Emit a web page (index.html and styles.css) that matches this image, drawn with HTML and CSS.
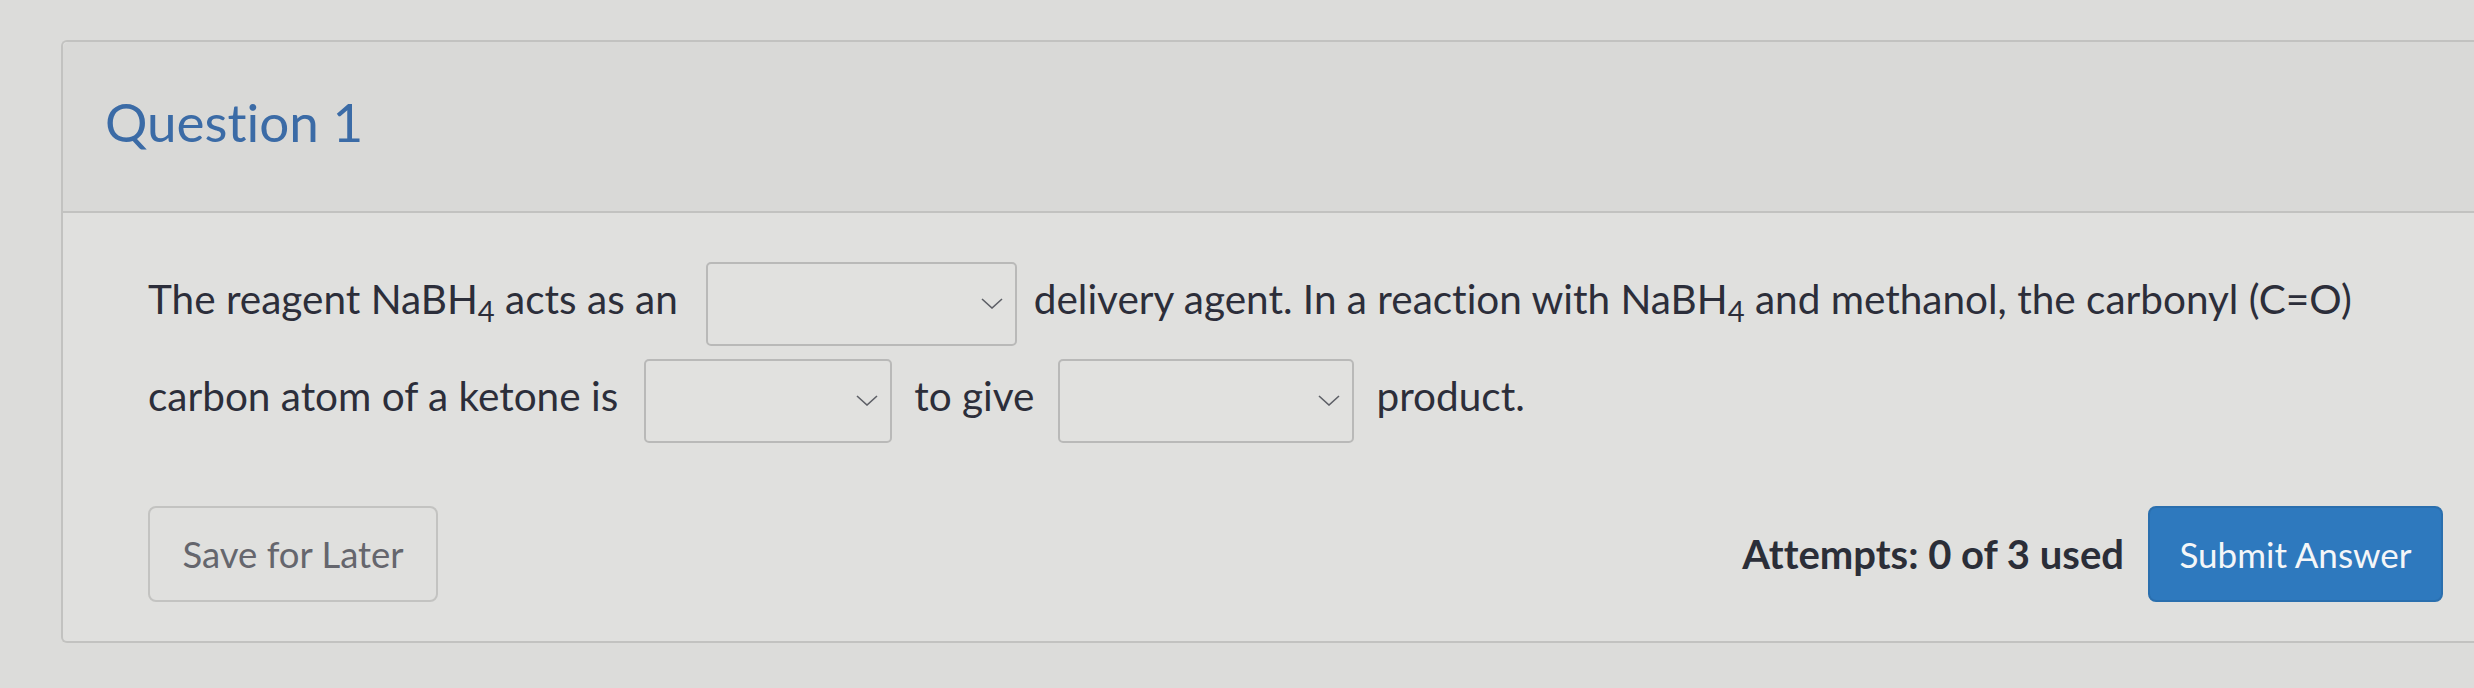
FILE: index.html
```html
<!DOCTYPE html>
<html lang="en">
<head>
<meta charset="utf-8">
<title>Question 1</title>
<link rel="stylesheet" href="styles.css">
</head>
<body>
<div class="page">
  <section class="card">
    <header class="card-header">
      <h2 class="title">Question 1</h2>
    </header>
    <div class="card-body">
      <p class="question"><span class="seg">The reagent NaBH</span><sub class="sub">4</sub><span class="seg"> acts as an</span><span class="select select-1"><svg class="chev" width="22" height="11" viewBox="0 0 22 11"><polyline points="1,1 11,10 21,1" fill="none" stroke="#5d5f66" stroke-width="1.6"/></svg></span><span class="seg">delivery agent. In a reaction with NaBH</span><sub class="sub">4</sub><span class="seg"> and methanol, the carbonyl (C=O)</span> <span class="seg">carbon atom of a ketone is</span><span class="select select-2"><svg class="chev" width="22" height="11" viewBox="0 0 22 11"><polyline points="1,1 11,10 21,1" fill="none" stroke="#5d5f66" stroke-width="1.6"/></svg></span><span class="seg">to give</span><span class="select select-3"><svg class="chev" width="22" height="11" viewBox="0 0 22 11"><polyline points="1,1 11,10 21,1" fill="none" stroke="#5d5f66" stroke-width="1.6"/></svg></span><span class="seg">product.</span></p>
      <div class="actions">
        <button class="btn btn-save">Save for Later</button>
        <div class="right">
          <span class="attempts">Attempts: 0 of 3 used</span>
          <button class="btn btn-submit">Submit Answer</button>
        </div>
      </div>
    </div>
  </section>
</div>
</body>
</html>
```
FILE: styles.css
```css
html, body {
  margin: 0;
  padding: 0;
}
body {
  background: #dcdcda;
  font-family: Lato, "Open Sans", "Liberation Sans", sans-serif;
  font-variant-ligatures: none;
  font-feature-settings: "liga" 0, "dlig" 0;
  overflow: hidden;
  width: 2474px;
  height: 688px;
}
.page {
  padding-top: 40px;
  padding-left: 61px;
}
.card {
  width: 2460px;
  border: 2px solid #c2c2c0;
  border-right: none;
  border-radius: 6px 0 0 6px;
  background: #e0e0de;
}
.card-header {
  background: #d9d9d7;
  border-bottom: 2px solid #c2c2c0;
  padding: 48px 0 57px 42px;
  border-radius: 6px 0 0 0;
}
.title {
  margin: 0;
  font-size: 53px;
  line-height: 64px;
  font-weight: 400;
  color: #3b6ba6;
}
.card-body {
  padding: 37px 0 39px 85px;
}
.question {
  margin: 0;
  width: 2298px;
  font-size: 40.5px;
  line-height: 97px;
  color: #2c2e3a;
}
.sub {
  font-size: 0.72em;
  vertical-align: -8px;
  line-height: 1;
}
.select {
  display: inline-flex;
  align-items: center;
  justify-content: flex-end;
  box-sizing: border-box;
  height: 84px;
  margin: 0 17px;
  padding-right: 12px;
  border: 2px solid #b9b9b8;
  border-radius: 5px;
  vertical-align: middle;
  background: #e1e1df;
}
.select-1 { width: 311px; margin-left: 28px; }
.select-2 { width: 248px; margin: 0 22px 0 26px; }
.select-3 { width: 296px; margin: 0 22px 0 24px; }
.chev {
  display: block;
}
.actions {
  display: flex;
  justify-content: space-between;
  align-items: center;
  margin-top: 62px;
  padding-right: 80px;
}
.right {
  display: flex;
  align-items: center;
  gap: 24px;
}
.btn {
  box-sizing: border-box;
  height: 96px;
  font-family: Lato, "Open Sans", "Liberation Sans", sans-serif;
  border-radius: 8px;
  padding: 0;
  white-space: nowrap;
  text-align: center;
  cursor: pointer;
}
.btn-save {
  width: 290px;
  font-size: 36.5px;
  background: #e0e0de;
  border: 2px solid #c3c3c1;
  color: #65666d;
}
.btn-submit {
  width: 295px;
  font-size: 35px;
  background: #2e79be;
  border: 2px solid #2a6fae;
  color: #f4f6f8;
}
.attempts {
  font-size: 40px;
  font-weight: 700;
  color: #2b2e38;
}
```
